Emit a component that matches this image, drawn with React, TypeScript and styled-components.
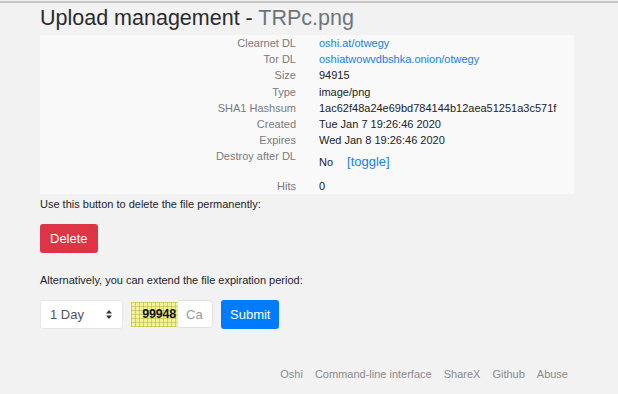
import styled, { createGlobalStyle } from "styled-components";

const GlobalStyle = createGlobalStyle`
  html, body {
    margin: 0;
    padding: 0;
    background: #f2f2f2;
    font-family: "Liberation Sans", Arial, sans-serif;
    color: #212529;
  }
`;

const Page = styled.div`
  border-top: 2px solid #c4c4c4;
  margin-top: 1px;
  min-height: 391px;
  box-sizing: border-box;
  display: flex;
  flex-direction: column;
`;

const Container = styled.div`
  padding: 0 44px 0 40px;
  flex: 1;
`;

const Title = styled.h1`
  margin: 3px 0 4px 0;
  font-size: 21.5px;
  font-weight: 400;
  line-height: 25px;
  color: #2b2b2b;
`;

const Muted = styled.span`
  color: #6c757d;
`;

const InfoTable = styled.table`
  width: 100%;
  border-collapse: collapse;
  background: #f9f9f9;
  font-size: 11px;
`;

const Label = styled.td`
  width: 256px;
  text-align: right;
  vertical-align: top;
  color: #7a7a7a;
  padding: 2px 11px 2px 0;
  line-height: 12.2px;
`;

const Value = styled.td<{ $tall?: boolean }>`
  padding: ${(p) => (p.$tall ? "8px 12px 9px" : "2px 12px")};
  color: #222;
  line-height: 12.2px;
`;

const Link = styled.a`
  color: #1a7fe0;
  text-decoration: none;
`;

const Toggle = styled.a`
  color: #1a7fe0;
  font-size: 13px;
  margin-left: 14px;
  text-decoration: none;
`;

const Note = styled.p`
  font-size: 11px;
  margin: 3px 0 0 0;
  line-height: 14px;
`;

const Button = styled.button<{ $color: string }>`
  background: ${(p) => p.$color};
  color: #fff;
  border: none;
  border-radius: 3px;
  font-family: inherit;
  font-size: 13px;
  height: 29px;
  padding: 0 ${(p) => (p.$color === "#007bff" ? 9 : 10)}px;
`;

const DeleteRow = styled.div`
  margin: 13px 0 20px;
`;

const Form = styled.form`
  display: flex;
  align-items: center;
  margin-top: 13px;
`;

const Select = styled.div`
  width: 83px;
  height: 29px;
  box-sizing: border-box;
  background: #fff;
  border-radius: 3px;
  border: 1px solid #e6e6e6;
  display: flex;
  align-items: center;
  justify-content: space-between;
  padding: 0 10px 0 9px;
  font-size: 13px;
  color: #555;
`;

const Arrows = styled.svg`
  width: 6px;
  height: 9px;
`;

const Captcha = styled.div`
  margin-left: 8px;
  width: 46px;
  height: 25px;
  box-sizing: border-box;
  padding-right: 1px;
  background-color: #f2f29a;
  background-image: repeating-linear-gradient(
      0deg,
      rgba(170, 170, 40, 0.45) 0 1px,
      transparent 1px 4px
    ),
    repeating-linear-gradient(
      90deg,
      rgba(170, 170, 40, 0.45) 0 1px,
      transparent 1px 4px
    );
  display: flex;
  align-items: center;
  justify-content: flex-end;
  font-family: "Liberation Sans", Arial, sans-serif;
  font-weight: 700;
  font-size: 12.5px;
  letter-spacing: -0.2px;
  color: #111;
  overflow: hidden;
`;

const Input = styled.input`
  width: 36px;
  height: 28px;
  box-sizing: border-box;
  border: 1px solid #e2e2e2;
  border-radius: 3px;
  background: #fff;
  font-family: inherit;
  font-size: 13px;
  padding: 0 9px 0 8px;
  &::placeholder {
    color: #9a9a9a;
  }
`;

const SubmitWrap = styled.div`
  margin-left: 8px;
`;

const Footer = styled.footer`
  display: flex;
  justify-content: flex-end;
  gap: 12px;
  padding: 0 50px 12px 0;
  font-size: 11px;
`;

const FooterLink = styled.a`
  color: #8a8a8a;
  text-decoration: none;
`;

const rows: [string, string, boolean?][] = [
  ["Clearnet DL", "oshi.at/otwegy", true],
  ["Tor DL", "oshiatwowvdbshka.onion/otwegy", true],
  ["Size", "94915"],
  ["Type", "image/png"],
  ["SHA1 Hashsum", "1ac62f48a24e69bd784144b12aea51251a3c571f"],
  ["Created", "Tue Jan 7 19:26:46 2020"],
  ["Expires", "Wed Jan 8 19:26:46 2020"],
];

export default function App() {
  return (
    <>
      <GlobalStyle />
      <Page>
        <Container>
          <Title>
            Upload management - <Muted>TRPc.png</Muted>
          </Title>
          <InfoTable>
            <tbody>
              {rows.map(([label, value, link]) => (
                <tr key={label}>
                  <Label>{label}</Label>
                  <Value>{link ? <Link href="#">{value}</Link> : value}</Value>
                </tr>
              ))}
              <tr>
                <Label>Destroy after DL</Label>
                <Value $tall>
                  No<Toggle href="#">[toggle]</Toggle>
                </Value>
              </tr>
              <tr>
                <Label>Hits</Label>
                <Value>0</Value>
              </tr>
            </tbody>
          </InfoTable>
          <Note>Use this button to delete the file permanently:</Note>
          <DeleteRow>
            <Button $color="#dc3545">Delete</Button>
          </DeleteRow>
          <Note>Alternatively, you can extend the file expiration period:</Note>
          <Form onSubmit={(e) => e.preventDefault()}>
            <Select>
              1 Day
              <Arrows viewBox="0 0 6 9">
                <path d="M3 0 L6 3.5 H0 Z M3 9 L6 5.5 H0 Z" fill="#333" />
              </Arrows>
            </Select>
            <Captcha>99948</Captcha>
            <Input placeholder="Captcha" />
            <SubmitWrap>
              <Button $color="#007bff" type="submit">
                Submit
              </Button>
            </SubmitWrap>
          </Form>
        </Container>
        <Footer>
          <FooterLink href="#">Oshi</FooterLink>
          <FooterLink href="#">Command-line interface</FooterLink>
          <FooterLink href="#">ShareX</FooterLink>
          <FooterLink href="#">Github</FooterLink>
          <FooterLink href="#">Abuse</FooterLink>
        </Footer>
      </Page>
    </>
  );
}
